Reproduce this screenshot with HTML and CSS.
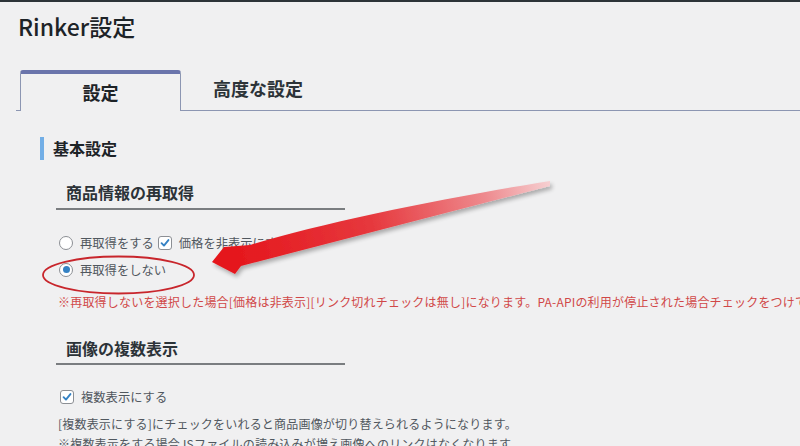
FILE: index.html
```html
<!DOCTYPE html>
<html lang="ja">
<head>
<meta charset="utf-8">
<title>Rinker設定</title>
<link rel="stylesheet" href="styles.css">
</head>
<body>
<div class="topbar"></div>
<h1 class="title">Rinker設定</h1>
<div class="tabs">
  <div class="tab tab-active">設定</div>
  <div class="tab">高度な設定</div>
</div>
<h2 class="section-title">基本設定</h2>
<div class="content">
  <h3 class="sub">商品情報の再取得</h3>
  <div class="rows">
    <label class="row"><span class="radio"></span><span class="lbl">再取得をする</span><span class="check checked"><svg viewBox="0 0 14 14" width="14" height="14"><path d="M3 7.2 L5.8 10 L11 3.6" fill="none" stroke="#3582c4" stroke-width="2.2" stroke-linecap="round" stroke-linejoin="round"/></svg></span><span class="lbl">価格を非表示にする</span></label>
    <label class="row"><span class="radio on"></span><span class="lbl">再取得をしない</span></label>
  </div>
  <p class="note">※再取得しないを選択した場合[価格は非表示][リンク切れチェックは無し]になります。PA-APIの利用が停止された場合チェックをつけてください。</p>
  <h3 class="sub sub2">画像の複数表示</h3>
  <label class="row row-single"><span class="check checked"><svg viewBox="0 0 14 14" width="14" height="14"><path d="M3 7.2 L5.8 10 L11 3.6" fill="none" stroke="#3582c4" stroke-width="2.2" stroke-linecap="round" stroke-linejoin="round"/></svg></span><span class="lbl">複数表示にする</span></label>
  <p class="desc">[複数表示にする]にチェックをいれると商品画像が切り替えられるようになります。<br>※複数表示をする場合JSファイルの読み込みが増え画像へのリンクはなくなります。</p>
</div>
<svg class="annot" viewBox="0 0 800 446" width="800" height="446">
  <defs>
    <linearGradient id="ag" gradientUnits="userSpaceOnUse" x1="550" y1="181" x2="225" y2="258">
      <stop offset="0" stop-color="#f6d0d2"/>
      <stop offset="0.2" stop-color="#ee8a8e"/>
      <stop offset="0.55" stop-color="#e6383d"/>
      <stop offset="1" stop-color="#e5151b"/>
    </linearGradient>
    <filter id="sh" x="-10%" y="-20%" width="130%" height="160%">
      <feGaussianBlur in="SourceAlpha" stdDeviation="2.2"/>
      <feOffset dx="2" dy="3" result="b"/>
      <feComponentTransfer><feFuncA type="linear" slope="0.3"/></feComponentTransfer>
      <feMerge><feMergeNode/><feMergeNode in="SourceGraphic"/></feMerge>
    </filter>
  </defs>
  <ellipse cx="118.5" cy="275" rx="75.5" ry="18.5" fill="none" stroke="#c8262c" stroke-width="1.8"/>
  <path filter="url(#sh)" fill="url(#ag)" d="M550,181 C450,197 330,221 250,245 L224,247 L212,262 L235,274 L241,266 L550,186 Z"/>
</svg>
</body>
</html>
```
FILE: styles.css
```css
html, body {
  margin: 0;
  padding: 0;
}
body {
  background: #f0f0f1;
  font-family: "Noto Sans CJK JP", "Noto Sans", sans-serif;
  color: #3c434a;
  width: 800px;
  height: 446px;
  overflow: hidden;
  position: relative;
}
.topbar {
  height: 2px;
  background: #2c3338;
}
.title {
  margin: 0;
  padding: 9px 0 0 18px;
  font-size: 23px;
  line-height: 30px;
  font-weight: 500;
  color: #1d2327;
}
.tabs {
  display: flex;
  margin: 29px 0 0 16px;
  height: 40px;
  border-bottom: 1px solid #8c96b2;
}
.tab {
  box-sizing: border-box;
  height: 40px;
  line-height: 37px;
  font-size: 18px;
  font-weight: 700;
  color: #2c3338;
  padding-left: 32px;
}
.tab-active {
  margin-left: 4px;
  width: 161px;
  height: 41px;
  padding: 0;
  text-align: center;
  background: #f0f0f1;
  border: 1px solid #8c96b2;
  border-top: 4px solid #6a74ab;
  border-bottom: none;
  border-radius: 3px 3px 0 0;
  margin-bottom: -1px;
  color: #1d2327;
}
.section-title {
  margin: 26px 0 0 40px;
  height: 23px;
  line-height: 23px;
  font-size: 16px;
  font-weight: 700;
  color: #1d2327;
  border-left: 4px solid #72aee6;
  padding-left: 9px;
}
.content {
  margin-left: 56px;
}
.sub {
  margin: 20px 0 0 0;
  width: 279px;
  padding: 0 0 4px 10px;
  font-size: 16px;
  line-height: 24px;
  font-weight: 700;
  color: #2c3338;
  border-bottom: 2px solid #7a7d80;
}
.sub2 {
  margin-top: 24px;
  padding-bottom: 3px;
}
.rows {
  margin-top: 19px;
  margin-left: 3px;
}
.row {
  display: flex;
  align-items: center;
  height: 27px;
}
.row-single {
  margin-top: 18px;
  margin-left: 4px;
}
.lbl {
  font-size: 12.3px;
  color: #50575e;
  margin-left: 7px;
  white-space: nowrap;
}
.radio {
  box-sizing: border-box;
  width: 14px;
  height: 14px;
  border-radius: 50%;
  border: 1px solid #8c8f94;
  background: #fff;
  display: flex;
  align-items: center;
  justify-content: center;
  flex: none;
}
.radio.on::after {
  content: "";
  width: 7px;
  height: 7px;
  border-radius: 50%;
  background: #3582c4;
}
.check {
  box-sizing: border-box;
  width: 14px;
  height: 14px;
  border: 1px solid #8c8f94;
  border-radius: 3px;
  background: #fff;
  display: flex;
  align-items: center;
  justify-content: center;
  flex: none;
  margin-left: 4px;
}
.row-single .check {
  margin-left: 0;
}
.check svg {
  display: block;
  width: 12px;
  height: 12px;
}
.note {
  margin: 9px 0 0 2px;
  font-size: 12px;
  line-height: 20px;
  letter-spacing: 0.2px;
  color: #d04848;
  white-space: nowrap;
}
.desc {
  margin: 4px 0 0 2px;
  font-size: 12px;
  line-height: 20px;
  letter-spacing: 0.2px;
  color: #50575e;
  white-space: nowrap;
}
.annot {
  position: absolute;
  left: 0;
  top: 0;
  pointer-events: none;
}
```
